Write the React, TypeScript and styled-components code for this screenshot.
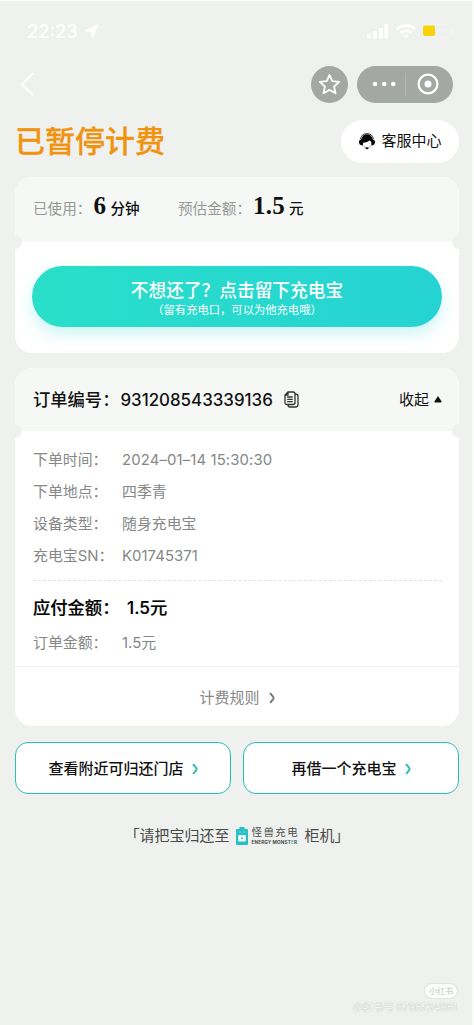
import React from "react";
import styled, { createGlobalStyle } from "styled-components";

const sans = `Inter, "Noto Sans CJK SC", sans-serif`;
const teal = "#2bbdb8";

const Global = createGlobalStyle`
  * { box-sizing: border-box; }
  body { margin: 0; background: #eff1ef; }
`;

const Screen = styled.div`
  width: 474px;
  height: 1025px;
  overflow: hidden;
  display: flex;
  flex-direction: column;
  padding: 0 13px 0 15px;
  background: #eff1ef;
  border-top: 1px solid #fbfcfb;
  border-right: 2px solid #fafbfa;
  font-family: ${sans};
  line-height: 24px;
  color: #111;
  white-space: nowrap;
`;

const StatusBar = styled.header`
  height: 60px;
  flex: none;
  display: flex;
  align-items: center;
  justify-content: space-between;
  padding: 0 5px 0 12px;
  color: #fff;
`;

const Clock = styled.div`
  display: flex;
  align-items: center;
  gap: 6px;
  font-size: 18.2px;
  line-height: 24px;
  font-weight: 500;
`;

const Signals = styled.div`
  display: flex;
  align-items: center;
  gap: 7px;
`;

const NavBar = styled.nav`
  height: 46px;
  flex: none;
  display: flex;
  align-items: center;
  justify-content: space-between;
  padding: 0 6px 0 4px;
`;

const NavActions = styled.div`
  display: flex;
  gap: 9px;
`;

const StarButton = styled.button`
  width: 37px;
  height: 37px;
  padding: 0;
  border: 0;
  border-radius: 50%;
  background: #a3a8a5;
  display: grid;
  place-items: center;
`;

const Capsule = styled.div`
  width: 96px;
  height: 37px;
  border-radius: 19px;
  background: #a3a8a5;
  display: flex;
  align-items: center;
`;

const CapsuleHalf = styled.div<{ $divided?: boolean }>`
  width: 48px;
  height: 23px;
  display: grid;
  place-items: center;
  padding: ${(p) => (p.$divided ? "0 3px 0 0" : "0 0 0 6px")};
  border-left: ${(p) => (p.$divided ? "1px solid #b4b8b5" : "0")};
`;

const TitleRow = styled.div`
  display: flex;
  align-items: center;
  justify-content: space-between;
  height: 44px;
  margin-top: 12px;
  flex: none;
`;

const Title = styled.h1`
  margin: 0;
  font-size: 30px;
  line-height: 44px;
  font-weight: 500;
  color: #f0930f;
  -webkit-text-stroke: 0.3px #f0930f;
`;

const ServiceButton = styled.button`
  width: 118px;
  height: 43px;
  padding: 0;
  border: 0;
  border-radius: 22px;
  background: #fff;
  display: flex;
  align-items: center;
  justify-content: center;
  gap: 5px;
  font-family: ${sans};
  font-size: 15px;
  line-height: 24px;
  color: #111;
`;

const Card = styled.section<{ $top: number; $height: number }>`
  width: 444px;
  height: ${(p) => p.$height}px;
  margin-top: ${(p) => p.$top}px;
  flex: none;
  border-radius: 17px;
  background: #fff;
  overflow: hidden;
`;

const CardHead = styled.div<{ $height: number }>`
  position: relative;
  height: ${(p) => p.$height}px;
  padding: 0 17px 0 18px;
  background: #f6f8f6;
  display: flex;
  align-items: center;

  &::before,
  &::after {
    content: "";
    position: absolute;
    bottom: -7px;
    width: 14px;
    height: 14px;
    border-radius: 50%;
    background: #eff1ef;
  }
  &::before { left: -7px; }
  &::after { right: -7px; }
`;

const UsageLabel = styled.span`
  font-size: 14.6px;
  line-height: 24px;
  color: #959a97;
`;

const UsageValue = styled.b<{ $wide?: boolean }>`
  width: ${(p) => (p.$wide ? 36 : 17)}px;
  margin: -5px 0 0 2px;
  font: bold 25px/30px "Liberation Serif", serif;
  letter-spacing: ${(p) => (p.$wide ? 0.3 : 0)}px;
`;

const Unit = styled.span`
  font-size: 14.6px;
  line-height: 24px;
  font-weight: 500;
`;

const Metric = styled.div<{ $width: number }>`
  display: flex;
  align-items: center;
  width: ${(p) => p.$width}px;
  height: 30px;
  margin-top: -2px;
`;

const KeepButton = styled.button`
  width: 410px;
  height: 61px;
  margin: 24px 17px 0;
  padding: 3px 0 0;
  border: 0;
  border-radius: 31px;
  background: linear-gradient(90deg, #29dfc9, #26d3d3);
  box-shadow: 0 7px 15px rgba(39, 215, 207, 0.24);
  color: #fff;
  font-family: ${sans};
  display: flex;
  flex-direction: column;
  align-items: center;
  justify-content: center;
`;

const KeepTitle = styled.span`
  font-size: 17.7px;
  line-height: 23px;
  font-weight: 500;
`;

const KeepNote = styled.span`
  font-size: 11.3px;
  line-height: 16px;
`;

const OrderNo = styled.div`
  display: flex;
  align-items: center;
  font-size: 17.3px;
  font-weight: 500;
`;

const OrderDigits = styled.span`
  width: 153px;
  font-size: 16.9px;
  margin: 0 11px 0 1px;
`;

const Collapse = styled.div`
  margin-left: auto;
  display: flex;
  align-items: center;
  gap: 5px;
  font-size: 15px;
`;

const Details = styled.dl`
  margin: 0 17px 0 18px;
  padding: 13px 0 8px;
  border-bottom: 1px dashed #dfe2e0;
`;

const Row = styled.div<{ $height?: number }>`
  display: flex;
  align-items: center;
  height: ${(p) => p.$height ?? 32}px;
  font-size: 14.9px;
  color: #858886;
`;

const RowLabel = styled.dt`
  width: 89px;
`;

const RowValue = styled.dd<{ $track?: number }>`
  margin: 0;
  letter-spacing: ${(p) => p.$track ?? 0}px;
`;

const Amounts = styled.dl`
  margin: 0;
  height: 86px;
  padding: 8px 18px 0;
  border-bottom: 1px solid #eff1ef;
`;

const DueRow = styled.div`
  display: flex;
  align-items: center;
  height: 37px;
  font-size: 17.3px;
  font-weight: 500;
  color: #000;
  -webkit-text-stroke: 0.2px #000;
`;

const DueLabel = styled.dt`
  width: 94px;
`;

const Rules = styled.div`
  height: 62px;
  display: flex;
  align-items: center;
  justify-content: center;
  gap: 9px;
  font-size: 15px;
  color: #858886;
`;

const Actions = styled.div`
  width: 444px;
  display: flex;
  gap: 12px;
  margin-top: 16px;
`;

const ActionButton = styled.button`
  flex: 1;
  height: 52px;
  padding: 1px 0 0;
  border: 1.5px solid ${teal};
  border-radius: 13px;
  background: #fff;
  font-family: ${sans};
  font-size: 15px;
  line-height: 24px;
  font-weight: 500;
  color: #111;
  display: flex;
  align-items: center;
  justify-content: center;
  gap: 8px;
`;

const ReturnHint = styled.footer`
  height: 24px;
  margin-top: 30px;
  display: flex;
  align-items: center;
  justify-content: center;
  font-size: 15px;
  color: #494c4a;
`;

const Brand = styled.span`
  display: flex;
  align-items: center;
  gap: 4px;
  margin: 0 6px;
`;

const BrandText = styled.span`
  display: flex;
  flex-direction: column;
  width: 47px;
`;

const BrandName = styled.span`
  font-size: 10.5px;
  line-height: 12px;
  letter-spacing: 1.4px;
`;

const BrandLatin = styled.span`
  font-size: 4.7px;
  line-height: 6px;
  font-weight: 700;
  letter-spacing: 0.12px;
  i { color: ${teal}; font-style: normal; }
`;

const Watermark = styled.div`
  margin: auto 0 10px;
  display: flex;
  flex-direction: column;
  align-items: flex-end;
  padding-right: 2px;
  color: #fafbfa;
  text-shadow: 0 0 1px #b2b5b3, 0 0 1px #c8cbc9;
  font-size: 10.3px;
  line-height: 15px;
`;

const WatermarkBadge = styled.span`
  width: 32px;
  height: 14px;
  margin-bottom: 2px;
  border-radius: 7px;
  background: #fbfcfb;
  box-shadow: 0 0 1px 1px #e0e3e1;
  color: #c6c9c7;
  font-size: 8px;
  line-height: 14px;
  text-align: center;
  text-shadow: none;
`;

const Chevron = ({ color }: { color: string }) => (
  <svg width="6" height="12" viewBox="0 0 6 12" fill="none" stroke={color} strokeWidth="2">
    <path d="M1.2 1C2.2 3 4.6 4.6 4.6 6S2.2 9 1.2 11" />
  </svg>
);

const details = [
  { label: "下单时间：", value: "2024–01–14 15:30:30", track: 0.12 },
  { label: "下单地点：", value: "四季青" },
  { label: "设备类型：", value: "随身充电宝" },
  { label: "充电宝SN：", value: "K01745371", track: 0.05 },
];

export default function App() {
  return (
    <>
      <Global />
      <Screen>
        <StatusBar>
          <Clock>
            22:23
            <svg width="15" height="15" viewBox="0 0 15 15" fill="#fff" stroke="#fff" strokeLinejoin="round">
              <path d="M14.2.7 1 6.8l6.8.8.4 6.6z" />
            </svg>
          </Clock>
          <Signals>
            <svg width="22" height="15" viewBox="0 0 22 15" fill="#fff">
              <rect x="0" y="10" width="4" height="4.5" rx="1" opacity=".8" />
              <rect x="6" y="7" width="4" height="7.5" rx="1" />
              <rect x="12" y="4" width="4" height="10.5" rx="1" />
              <rect x="17.5" y="0" width="3.5" height="14.5" rx="1" />
            </svg>
            <svg width="20" height="15" viewBox="0 0 20 15" fill="none" stroke="#fff" strokeWidth="2.8">
              <path d="M1 5.2C6 .4 14 .4 19 5.2M4.5 9c3.3-2.8 7.7-2.8 11 0" />
              <path d="m10 14-2.7-2.8q2.7-2 5.4 0z" fill="#fff" stroke="none" />
            </svg>
            <svg width="31" height="15" viewBox="0 0 31 15">
              <rect x=".5" y=".5" width="27" height="13.5" rx="4" fill="none" stroke="#f3f5f3" />
              <rect x="0" y="1.5" width="12" height="10.5" rx="2" fill="#f9d20b" />
              <path d="M29 5v5q2-2.5 0-5" fill="#f8f9f8" />
            </svg>
          </Signals>
        </StatusBar>

        <NavBar>
          <svg width="16" height="24" viewBox="0 0 16 24" fill="none" stroke="#fff" strokeWidth="2">
            <path d="M14.5 1 3 12.3 14.5 23.5" />
          </svg>
          <NavActions>
            <StarButton>
              <svg width="23" height="23" viewBox="0 0 23 23" fill="none" stroke="#fff" strokeWidth="1.8" strokeLinejoin="round">
                <path d="m11.5 1.8 2.8 6.3 6.9.7-5.1 4.7 1.4 6.8-6-3.4-6 3.4 1.4-6.8-5.1-4.7 6.9-.7z" />
              </svg>
            </StarButton>
            <Capsule>
              <CapsuleHalf>
                <svg width="24" height="6" viewBox="0 0 24 6" fill="#fff">
                  <circle cx="3" cy="3" r="2.3" />
                  <circle cx="12.2" cy="3" r="2.3" />
                  <circle cx="21.3" cy="3" r="2.3" />
                </svg>
              </CapsuleHalf>
              <CapsuleHalf $divided>
                <svg width="22" height="22" viewBox="0 0 22 22">
                  <circle cx="11" cy="11" r="9.4" fill="none" stroke="#fff" strokeWidth="2.2" />
                  <circle cx="11" cy="11" r="3.5" fill="#fff" />
                </svg>
              </CapsuleHalf>
            </Capsule>
          </NavActions>
        </NavBar>

        <TitleRow>
          <Title>已暂停计费</Title>
          <ServiceButton>
            <svg width="18" height="18" viewBox="0 0 18 18">
              <path d="M2.6 7a6.500 6.500 0 0 1 12.800 0" fill="none" stroke="#333" strokeWidth="1" />
              <path d="M3.2 7.500C4 4 6.200 2.300 9 2.300S14 4 14.800 7.500q2.500.3 2.200 3-.2 2.500-2.400 2.700L13.400 14l-.2-4.200-1.600-1.300Q8.800 11 5.200 10.600l-.4 3-1.400-.4Q1.200 13 1 10.500q-.3-2.700 2.200-3z" fill="#080808" />
              <path d="M4.800 13.200q1.500 2.600 4.200 2.800 2.800-.2 5-3" fill="none" stroke="#999" strokeWidth=".8" />
              <ellipse cx="9" cy="16.200" rx="1.500" ry="1" fill="#111" />
            </svg>
            客服中心
          </ServiceButton>
        </TitleRow>

        <Card $top={14} $height={176}>
          <CardHead $height={65}>
            <Metric $width={145}>
              <UsageLabel>已使用：</UsageLabel>
              <UsageValue>6</UsageValue>
              <Unit>分钟</Unit>
            </Metric>
            <Metric $width={140}>
              <UsageLabel>预估金额：</UsageLabel>
              <UsageValue $wide>1.5</UsageValue>
              <Unit>元</Unit>
            </Metric>
          </CardHead>
          <KeepButton>
            <KeepTitle>不想还了？点击留下充电宝</KeepTitle>
            <KeepNote>（留有充电口，可以为他充电哦）</KeepNote>
          </KeepButton>
        </Card>

        <Card $top={15} $height={358}>
          <CardHead $height={63}>
            <OrderNo>
              订单编号：
              <OrderDigits>931208543339136</OrderDigits>
              <svg width="15" height="17" viewBox="0 0 15 17" fill="none" stroke="#333" strokeWidth="1.3">
                <path d="M4 1h5q2 0 2 2v8.500q0 2-2 2H3q-2 0-2-2V4zM4 1v3H1M3.200 6h5.500M3.200 8.300h5.500M3.200 10.600h5.500" />
                <path d="M11 3q3 0 3 2v8.500q0 2.500-2.500 2.500H6q-2 0-2-2.300" />
              </svg>
            </OrderNo>
            <Collapse>
              收起
              <svg width="8" height="7" viewBox="0 0 8 7" fill="#111">
                <path d="M4 0 7.600 5.500q.2 1-.7 1H1.100q-.9 0-.7-1z" />
              </svg>
            </Collapse>
          </CardHead>
          <Details>
            {details.map((d) => (
              <Row key={d.label}>
                <RowLabel>{d.label}</RowLabel>
                <RowValue $track={d.track}>{d.value}</RowValue>
              </Row>
            ))}
          </Details>
          <Amounts>
            <DueRow>
              <DueLabel>应付金额：</DueLabel>
              <RowValue>1.5元</RowValue>
            </DueRow>
            <Row $height={34}>
              <RowLabel>订单金额：</RowLabel>
              <RowValue>1.5元</RowValue>
            </Row>
          </Amounts>
          <Rules>
            计费规则
            <Chevron color="#777b79" />
          </Rules>
        </Card>

        <Actions>
          <ActionButton>
            查看附近可归还门店
            <Chevron color={teal} />
          </ActionButton>
          <ActionButton>
            再借一个充电宝
            <Chevron color={teal} />
          </ActionButton>
        </Actions>

        <ReturnHint>
          「请把宝归还至
          <Brand>
            <svg width="12" height="18" viewBox="0 0 12 18">
              <path d="M3.500 0h5v2H11q1 0 1 1v14q0 1-1 1H1q-1 0-1-1V3q0-1 1-1h2.500z" fill="#28bfc5" />
              <rect x="2.200" y="8" width="7.600" height="6.500" rx="1" fill="#f4fbfa" />
              <path d="M3.500 5h1M7.500 5h1" stroke="#e7f8f7" />
              <circle cx="6" cy="11.200" r="1" fill="#28bfc5" />
            </svg>
            <BrandText>
              <BrandName>怪兽充电</BrandName>
              <BrandLatin>ENERGY MONST<i>E</i>R</BrandLatin>
            </BrandText>
          </Brand>
          柜机」
        </ReturnHint>

        <Watermark>
          <WatermarkBadge>小红书</WatermarkBadge>
          <span>小红书号 6798734981</span>
        </Watermark>
      </Screen>
    </>
  );
}
